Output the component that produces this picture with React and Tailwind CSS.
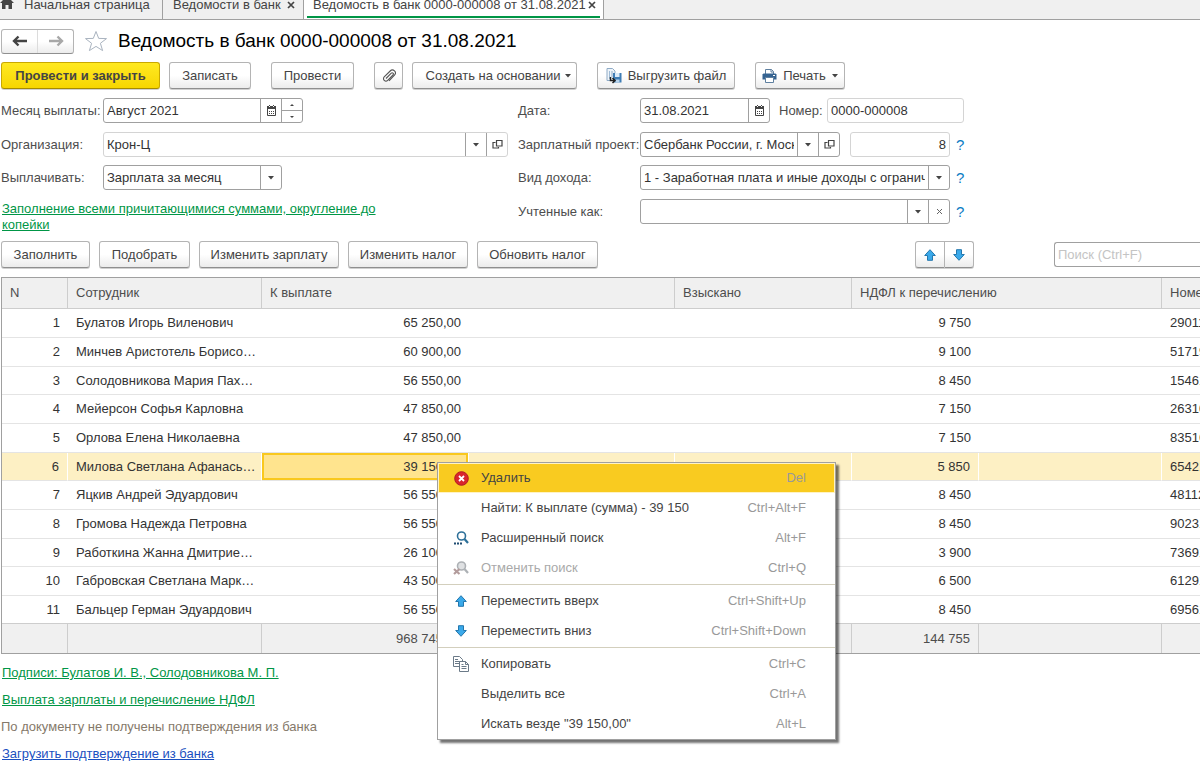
import React, { useState } from "react";
import clsx from "clsx";

const ROWS = [
  { id: 1, name: "Булатов Игорь Виленович", sum: "65 250,00", tax: "9 750", account: "29011" },
  { id: 2, name: "Минчев Аристотель Борисо…", sum: "60 900,00", tax: "9 100", account: "51719" },
  { id: 3, name: "Солодовникова Мария Пах…", sum: "56 550,00", tax: "8 450", account: "15461" },
  { id: 4, name: "Мейерсон Софья Карловна", sum: "47 850,00", tax: "7 150", account: "26310" },
  { id: 5, name: "Орлова Елена Николаевна", sum: "47 850,00", tax: "7 150", account: "83516" },
  { id: 6, name: "Милова Светлана Афанась…", sum: "39 150,00", tax: "5 850", account: "65421" },
  { id: 7, name: "Яцкив Андрей Эдуардович", sum: "56 550,00", tax: "8 450", account: "48112" },
  { id: 8, name: "Громова Надежда Петровна", sum: "56 550,00", tax: "8 450", account: "90231" },
  { id: 9, name: "Работкина Жанна Дмитрие…", sum: "26 100,00", tax: "3 900", account: "73691" },
  { id: 10, name: "Габровская Светлана Марк…", sum: "43 500,00", tax: "6 500", account: "61291" },
  { id: 11, name: "Бальцер Герман Эдуардович", sum: "56 550,00", tax: "8 450", account: "69561" },
];

const HomeIcon = () => (
  <svg width="14" height="14" viewBox="0 0 14 14" fill="#444" className="-mt-1">
    <path d="M7 0 0 7h2v6h3.500V9h3v4H12V7h2z" />
  </svg>
);

const CloseIcon = () => (
  <svg width="8" height="8" viewBox="0 0 8 8" stroke="#444" strokeWidth="1.700" className="mt-px shrink-0">
    <path d="m1 1 6 6M7 1 1 7" />
  </svg>
);

const BackIcon = ({ color, flip }) => (
  <svg width="16" height="12" viewBox="0 0 16 12" className={clsx(flip && "-scale-x-100")}>
    <path d="M6.500 1.500 2 6l4.500 4.500M2 6h13" fill="none" stroke={color} strokeWidth="2.400" />
  </svg>
);

const StarIcon = () => (
  <svg width="24" height="22" viewBox="0 0 24 22">
    <path
      d="M12 1.500 14.700 8.400 22.500 8.600 16.400 13.300 18.600 20.600 12 16.400 5.400 20.600 7.600 13.300 1.500 8.600 9.300 8.400z"
      fill="#fff"
      stroke="#a9b3bf"
    />
  </svg>
);

const ClipIcon = () => (
  <svg width="14" height="14" viewBox="0 0 14 14" fill="none" stroke="#555" strokeWidth="1.100">
    <path d="M4 9.500 9.300 4.200a1.200 1.200 0 0 1 1.700 1.700L5.700 11.300a2.400 2.400 0 0 1-3.500-3.400L8.200 2a3 3 0 0 1 4.300 4.200L7 11.800" />
  </svg>
);

const ExportIcon = () => (
  <svg width="16" height="16" viewBox="0 0 16 16">
    <path d="M1 .5h5.500L9 3v9.500H1z" fill="#eef4fa" stroke="#8fabc6" />
    <path d="M3 4h1M3 6h1M3 8h1M3 10h1" stroke="#5384b3" />
    <path d="M5 4h2M5 6h2M5 8h2" stroke="#8fabc6" />
    <path d="M7 5h8.500v9.500H7z" fill="#3f7db5" />
    <path d="M9 5h4.500v4H9z" fill="#dcebf8" />
    <path d="M9.500 11.500h4v3h-4z" fill="#b9d4ec" />
    <path d="M4.500 9v3.500h4M6.500 10l2.500 2.500L6.500 15" fill="none" stroke="#222" strokeWidth="1.500" />
  </svg>
);

const PrintIcon = () => (
  <svg width="15" height="14" viewBox="0 0 15 14">
    <path d="M3.500 5V.5h6l2 2V5" fill="#fff" stroke="#5e7f9f" />
    <path d="M9 .5V3h2.500" fill="none" stroke="#5e7f9f" />
    <path d="M1.500 4.500h12l1 1v5h-14v-5z" fill="#356391" />
    <path d="M11 6h2v1h-2z" fill="#fff" />
    <path d="M3.500 8.500h8v5h-8z" fill="#fff" stroke="#5e7f9f" />
  </svg>
);

const CaretIcon = () => (
  <svg width="6" height="4" viewBox="0 0 6 4" fill="#444" className="shrink-0">
    <path d="M0 0h6L3 3.500z" />
  </svg>
);

const CalendarIcon = () => (
  <svg width="11" height="11" viewBox="0 0 11 11">
    <path d="M1.500 2.500h8v8h-8z" fill="#fff" stroke="#444" />
    <path d="M1 1h9v3H1z" fill="#444" />
    <path d="M3.500 0v2.500M7.500 0v2.500" stroke="#444" />
    <path d="M3.500 1v1M7.500 1v1" stroke="#fff" />
    <path d="M3 6.500h5M3 8.500h5" stroke="#444" strokeDasharray="1 1" />
  </svg>
);

const OpenIcon = () => (
  <svg width="11" height="11" viewBox="0 0 11 11" fill="none" stroke="#444" strokeWidth="1.200">
    <path d="M4.500 1.500h5.500v5.500H4.500zM3.500 3.500H1v5.500h5.500V8" />
  </svg>
);

const ArrowIcon = ({ down }) => (
  <svg width="12" height="12" viewBox="0 0 12 12" className={clsx(down && "rotate-180")}>
    <path d="M6 .7 11.300 6.500H8.500v4.800h-5V6.500H.7z" fill="#3aa9ea" stroke="#2377ad" />
  </svg>
);

const DeleteIcon = () => (
  <svg width="15" height="15" viewBox="0 0 15 15">
    <circle cx="7.500" cy="7.500" r="6.800" fill="#d9262c" stroke="#b01c22" />
    <path d="m5 5 5 5M10 5l-5 5" stroke="#fff" strokeWidth="1.800" />
  </svg>
);

const FindIcon = () => (
  <svg width="16" height="14" viewBox="0 0 16 14">
    <circle cx="8.500" cy="5" r="4" fill="#fff" stroke="#2d7099" strokeWidth="1.600" />
    <path d="m11.500 8 3.500 4" stroke="#2d7099" strokeWidth="2.200" />
    <path d="M1 12.500h8" stroke="#1f4d72" strokeWidth="2" strokeDasharray="2 1" />
  </svg>
);

const CancelFindIcon = () => (
  <svg width="16" height="14" viewBox="0 0 16 14">
    <circle cx="8.500" cy="5" r="4" fill="#dfe1e3" stroke="#adb1b5" strokeWidth="1.600" />
    <path d="m11.500 8 3.500 4" stroke="#adb1b5" strokeWidth="2.200" />
    <path d="m1 8 5.500 5M6.500 8 1 13" stroke="#b39c9c" strokeWidth="2.200" />
  </svg>
);

const CopyIcon = () => (
  <svg width="16" height="16" viewBox="0 0 16 16" fill="#fff" stroke="#6b7a88">
    <path d="M.5 .5h6l3 3v7h-9z" />
    <path d="M2 3.500h3M2 5.500h5M2 7.500h5" />
    <path d="M6.500 5.500h6l3 3v7h-9z" />
    <path d="M12.500 5.500v3h3M8.500 8.500h2M8.500 10.500h5M8.500 12.500h5" fill="none" />
  </svg>
);

const MENU = [
  [
    { label: "Удалить", keys: "Del", icon: <DeleteIcon />, active: true },
    { label: "Найти: К выплате (сумма) - 39 150", keys: "Ctrl+Alt+F" },
    { label: "Расширенный поиск", keys: "Alt+F", icon: <FindIcon /> },
    { label: "Отменить поиск", keys: "Ctrl+Q", icon: <CancelFindIcon />, disabled: true },
  ],
  [
    { label: "Переместить вверх", keys: "Ctrl+Shift+Up", icon: <ArrowIcon /> },
    { label: "Переместить вниз", keys: "Ctrl+Shift+Down", icon: <ArrowIcon down /> },
  ],
  [
    { label: "Копировать", keys: "Ctrl+C", icon: <CopyIcon /> },
    { label: "Выделить все", keys: "Ctrl+A" },
    { label: 'Искать везде "39 150,00"', keys: "Alt+L" },
  ],
];

const Button = ({ primary, className, children, ...rest }) => (
  <button
    type="button"
    className={clsx(
      "flex h-[27px] shrink-0 items-center justify-center whitespace-nowrap rounded-[3px] border bg-linear-to-b text-[#444] shadow-[0_1px_0_#d0d0d0]",
      primary
        ? "border-[#c9a800] border-b-[#a68b00] from-[#ffe91f] to-[#f7d600] font-bold"
        : "border-[#b4b4b4] border-b-[#8f8f8f] from-white from-50% to-[#ececec]",
      className
    )}
    {...rest}
  >
    {children}
  </button>
);

const FieldButton = ({ className, children, ...rest }) => (
  <button
    type="button"
    className={clsx("flex w-[21px] shrink-0 items-center justify-center border-l border-[#a0a0a0]", className)}
    {...rest}
  >
    {children}
  </button>
);

const Field = ({ light, className, children }) => (
  <div
    className={clsx(
      "flex h-[25px] shrink-0 overflow-hidden rounded-[3px] border bg-white",
      light ? "border-[#d4d4d4]" : "border-[#a0a0a0]",
      className
    )}
  >
    {children}
  </div>
);

const Select = ({ id, value, label }) => (
  <div className="relative flex min-w-0 flex-1">
    <select
      id={id}
      aria-label={label}
      defaultValue={value}
      className="w-full min-w-0 appearance-none bg-transparent pl-[3px] pr-6 text-[#333] outline-none"
    >
      <option>{value}</option>
    </select>
    <span className="pointer-events-none absolute inset-y-0 right-0 flex w-[21px] items-center justify-center border-l border-[#a0a0a0]">
      <CaretIcon />
    </span>
  </div>
);

const Input = ({ className, ...rest }) => (
  <input
    type="text"
    className={clsx("w-full min-w-0 flex-1 bg-transparent px-[3px] text-[#333] outline-none", className)}
    {...rest}
  />
);

const Help = () => (
  <a href="#help" className="ml-[6px] text-[15px] leading-4 text-[#0a7cc4]">
    ?
  </a>
);

const Tabs = () => (
  <nav className="flex h-5 border-b border-[#a0a0a0] bg-[#f0f0f0] leading-[10px] text-[#444]">
    <a href="#home" className="flex w-[163px] items-start border-r border-[#a0a0a0]">
      <HomeIcon />
      <span className="ml-[10px]">Начальная страница</span>
    </a>
    <a href="#list" className="flex w-[141px] items-start justify-between border-r border-[#a0a0a0] pl-[10px] pr-2">
      Ведомости в банк <CloseIcon />
    </a>
    <a href="#doc" className="flex w-[300px] items-start border-r border-[#a0a0a0] bg-white px-[3px]">
      <span className="flex h-[18px] flex-1 items-start justify-between whitespace-nowrap border-b-2 border-[#009646] pl-[6px] pr-1">
        Ведомость в банк 0000-000008 от 31.08.2021 <CloseIcon />
      </span>
    </a>
  </nav>
);

const LeftFields = () => (
  <div className="w-[507px] shrink-0">
    <div className="flex items-center">
      <label htmlFor="month" className="w-[102px] shrink-0">Месяц выплаты:</label>
      <Field className="w-[200px]">
        <Input id="month" defaultValue="Август 2021" />
        <FieldButton aria-label="Выбрать месяц">
          <CalendarIcon />
        </FieldButton>
        <div className="flex w-[21px] flex-col border-l border-[#a0a0a0]">
          <button type="button" aria-label="Больше" className="flex flex-1 items-center justify-center border-b border-[#a0a0a0]">
            <svg width="4" height="2" viewBox="0 0 4 2" fill="#444"><path d="M0 2h4L2 0z" /></svg>
          </button>
          <button type="button" aria-label="Меньше" className="flex flex-1 items-center justify-center">
            <svg width="4" height="2" viewBox="0 0 4 2" fill="#444"><path d="M0 0h4L2 2z" /></svg>
          </button>
        </div>
      </Field>
    </div>
    <div className="mt-[9px] flex items-center">
      <label htmlFor="org" className="w-[102px] shrink-0">Организация:</label>
      <Field light className="flex-1">
        <Select id="org" value="Крон-Ц" />
        <FieldButton aria-label="Открыть организацию">
          <OpenIcon />
        </FieldButton>
      </Field>
    </div>
    <div className="mt-2 flex items-center">
      <label htmlFor="kind" className="w-[102px] shrink-0">Выплачивать:</label>
      <Field className="w-[179px]">
        <Select id="kind" value="Зарплата за месяц" />
      </Field>
    </div>
    <a href="#fill" className="ml-px mt-[11px] block w-[385px] leading-4 text-[#009646] underline">
      Заполнение всеми причитающимися суммами, округление до копейки
    </a>
  </div>
);

const RightFields = () => (
  <div className="ml-[10px] flex-1">
    <div className="flex items-center">
      <label htmlFor="date" className="w-[122px] shrink-0">Дата:</label>
      <Field className="w-[130px]">
        <Input id="date" defaultValue="31.08.2021" />
        <FieldButton aria-label="Выбрать дату">
          <CalendarIcon />
        </FieldButton>
      </Field>
      <label htmlFor="number" className="ml-[9px] w-12 shrink-0">Номер:</label>
      <Field light className="w-[137px]">
        <Input id="number" defaultValue="0000-000008" />
      </Field>
    </div>
    <div className="mt-[9px] flex items-center">
      <label htmlFor="project" className="w-[122px] shrink-0 whitespace-nowrap">Зарплатный проект:</label>
      <Field className="w-[200px]">
        <Select id="project" value="Сбербанк России, г. Москва" />
        <FieldButton aria-label="Открыть проект">
          <OpenIcon />
        </FieldButton>
      </Field>
      <Field light className="ml-[10px] w-[100px]">
        <Input aria-label="Номер реестра" defaultValue="8" className="text-right" />
      </Field>
      <Help />
    </div>
    <div className="mt-2 flex items-center">
      <label htmlFor="income" className="w-[122px] shrink-0">Вид дохода:</label>
      <Field className="w-[310px]">
        <Select id="income" value="1 - Заработная плата и иные доходы с ограничением взыскания" />
      </Field>
      <Help />
    </div>
    <div className="mt-[9px] flex items-center">
      <label htmlFor="counted" className="w-[122px] shrink-0">Учтенные как:</label>
      <Field className="w-[310px]">
        <Select id="counted" value="" />
        <FieldButton aria-label="Очистить">
          <svg width="7" height="7" viewBox="0 0 7 7" stroke="#666"><path d="m1 1 5 5M6 1 1 6" /></svg>
        </FieldButton>
      </Field>
      <Help />
    </div>
  </div>
);

const Table = ({ selected, setSelected }) => (
  <div className="overflow-hidden border-y border-l border-[#a0a0a0]">
    <table className="w-[1300px] table-fixed border-separate border-spacing-0">
      <colgroup>
        <col className="w-[66px]" />
        <col className="w-[194px]" />
        <col className="w-[207px]" />
        <col className="w-[206px]" />
        <col className="w-[177px]" />
        <col className="w-[127px]" />
        <col className="w-[183px]" />
        <col />
      </colgroup>
      <thead className="bg-[#f0f0f0] text-left text-[#4d4d4d] [&_th]:h-[31px] [&_th]:border-b [&_th]:border-r [&_th]:border-[#cdcdcd] [&_th]:px-2 [&_th]:font-normal">
        <tr>
          <th>N</th>
          <th>Сотрудник</th>
          <th colSpan={2}>К выплате</th>
          <th>Взыскано</th>
          <th colSpan={2}>НДФЛ к перечислению</th>
          <th>Номер</th>
        </tr>
      </thead>
      <tbody className="text-[#333]">
        {ROWS.map((row) => {
          const active = row.id === selected;
          return (
            <tr
              key={row.id}
              onClick={() => setSelected(row.id)}
              className={clsx(
                "h-[29px] nth-[3n]:h-7 last:h-[27px] [&_td]:border-b [&_td]:border-b-[#e4e4e4] [&_td]:px-2 last:[&_td]:border-b-0",
                active && "bg-[#fdf0c4] [&_td]:border-r [&_td]:border-r-white"
              )}
            >
              <td className="text-right">{row.id}</td>
              <td className="whitespace-nowrap !pr-0">{row.name}</td>
              <td
                className={clsx(
                  "text-right",
                  active && "bg-[#ffe48e] !pr-[7px] shadow-[inset_0_0_0_2px_#f9c81e]"
                )}
              >
                {row.sum}
              </td>
              <td />
              <td />
              <td className="text-right">{row.tax}</td>
              <td />
              <td>{row.account}</td>
            </tr>
          );
        })}
      </tbody>
      <tfoot className="bg-[#f0f0f0] text-right text-[#4d4d4d] [&_td]:h-[30px] [&_td]:border-r [&_td]:border-t [&_td]:border-[#cdcdcd] [&_td]:px-2">
        <tr>
          <td />
          <td />
          <td className="!border-r-0">968 745,00</td>
          <td />
          <td />
          <td>144 755</td>
          <td />
          <td />
        </tr>
      </tfoot>
    </table>
  </div>
);

const ContextMenu = () => (
  <div
    role="menu"
    className="absolute left-[436px] top-[185px] w-[399px] border border-[#a0a0a0] bg-white shadow-[3px_3px_2px_rgba(0,0,0,0.55)]"
  >
    {MENU.map((group, index) => (
      <div key={index} className={clsx(index > 0 && "mt-px border-t border-[#d3cfbd] pt-px")}>
        {group.map((item) => (
          <button
            key={item.label}
            type="button"
            role="menuitem"
            disabled={item.disabled}
            className={clsx(
              "flex h-[30px] w-full items-center border pr-7 text-left",
              item.active ? "border-[#fff3c4] bg-[#f9cb20]" : "border-transparent",
              item.disabled ? "text-[#a9a9a9]" : "text-[#444]"
            )}
          >
            <span className="flex w-[42px] shrink-0 justify-center pl-[2px]">{item.icon}</span>
            <span className="flex-1">{item.label}</span>
            <span className="text-[#999]">{item.keys}</span>
          </button>
        ))}
      </div>
    ))}
  </div>
);

const App = () => {
  const [selected, setSelected] = useState(6);

  return (
    <div className="min-h-screen overflow-hidden bg-white font-['Liberation_Sans',Arial,sans-serif] text-[13px] leading-4 text-[#4d4d4d]">
      <Tabs />
      <main className="pl-px">
        <header className="flex h-[42px] items-center">
          <div className="flex h-[25px] w-[73px] rounded-[3px] border border-[#b4b4b4] border-b-[#8f8f8f] bg-linear-to-b from-white from-50% to-[#ececec]">
            <button type="button" aria-label="Назад" className="flex flex-1 items-center justify-center">
              <BackIcon color="#444" />
            </button>
            <button type="button" aria-label="Вперед" className="flex flex-1 items-center justify-center border-l border-[#dcdcdc]">
              <BackIcon color="#a8a8a8" flip />
            </button>
          </div>
          <button type="button" aria-label="В избранное" className="ml-[10px]">
            <StarIcon />
          </button>
          <h1 className="ml-[10px] text-[19px] leading-6 text-black">Ведомость в банк 0000-000008 от 31.08.2021</h1>
        </header>

        <div className="flex">
          <Button primary className="w-[159px]">Провести и закрыть</Button>
          <Button className="ml-[9px] w-[82px]">Записать</Button>
          <Button className="ml-5 w-[83px]">Провести</Button>
          <Button className="ml-5 w-[29px]" aria-label="Файлы">
            <ClipIcon />
          </Button>
          <Button className="ml-[9px] w-[165px] gap-[5px] pl-2">
            Создать на основании <CaretIcon />
          </Button>
          <Button className="ml-5 w-[138px] gap-[6px]">
            <ExportIcon /> Выгрузить файл
          </Button>
          <Button className="ml-5 w-[90px] gap-[6px]">
            <PrintIcon /> Печать <CaretIcon />
          </Button>
        </div>

        <form className="mt-[9px] flex">
          <LeftFields />
          <RightFields />
        </form>

        <div className="mt-2 flex items-center">
          <div className="flex flex-1 gap-[9px]">
            <Button className="w-[89px]">Заполнить</Button>
            <Button className="w-[91px]">Подобрать</Button>
            <Button className="w-[140px]">Изменить зарплату</Button>
            <Button className="w-[120px]">Изменить налог</Button>
            <Button className="w-[121px]">Обновить налог</Button>
          </div>
          <Button className="w-[30px] rounded-r-none" aria-label="Вверх">
            <ArrowIcon />
          </Button>
          <Button className="w-[29px] rounded-l-none border-l-0" aria-label="Вниз">
            <ArrowIcon down />
          </Button>
          <Field className="ml-20 w-[146px] rounded-r-none border-r-0">
            <Input aria-label="Поиск" placeholder="Поиск (Ctrl+F)" className="placeholder:text-[#c4c4c4]" />
          </Field>
        </div>

        <div className="relative mt-[9px]">
          <Table selected={selected} setSelected={setSelected} />
          <ContextMenu />
        </div>

        <footer className="mt-[11px] flex flex-col items-start gap-[11px] pb-2">
          <a href="#signatures" className="ml-px text-[#009646] underline">Подписи: Булатов И. В., Солодовникова М. П.</a>
          <a href="#payment" className="ml-px text-[#009646] underline">Выплата зарплаты и перечисление НДФЛ</a>
          <p className="text-[#85796a]">По документу не получены подтверждения из банка</p>
          <a href="#upload" className="ml-px text-[#1a4fc0] underline">Загрузить подтверждение из банка</a>
        </footer>
      </main>
    </div>
  );
};

export default App;
